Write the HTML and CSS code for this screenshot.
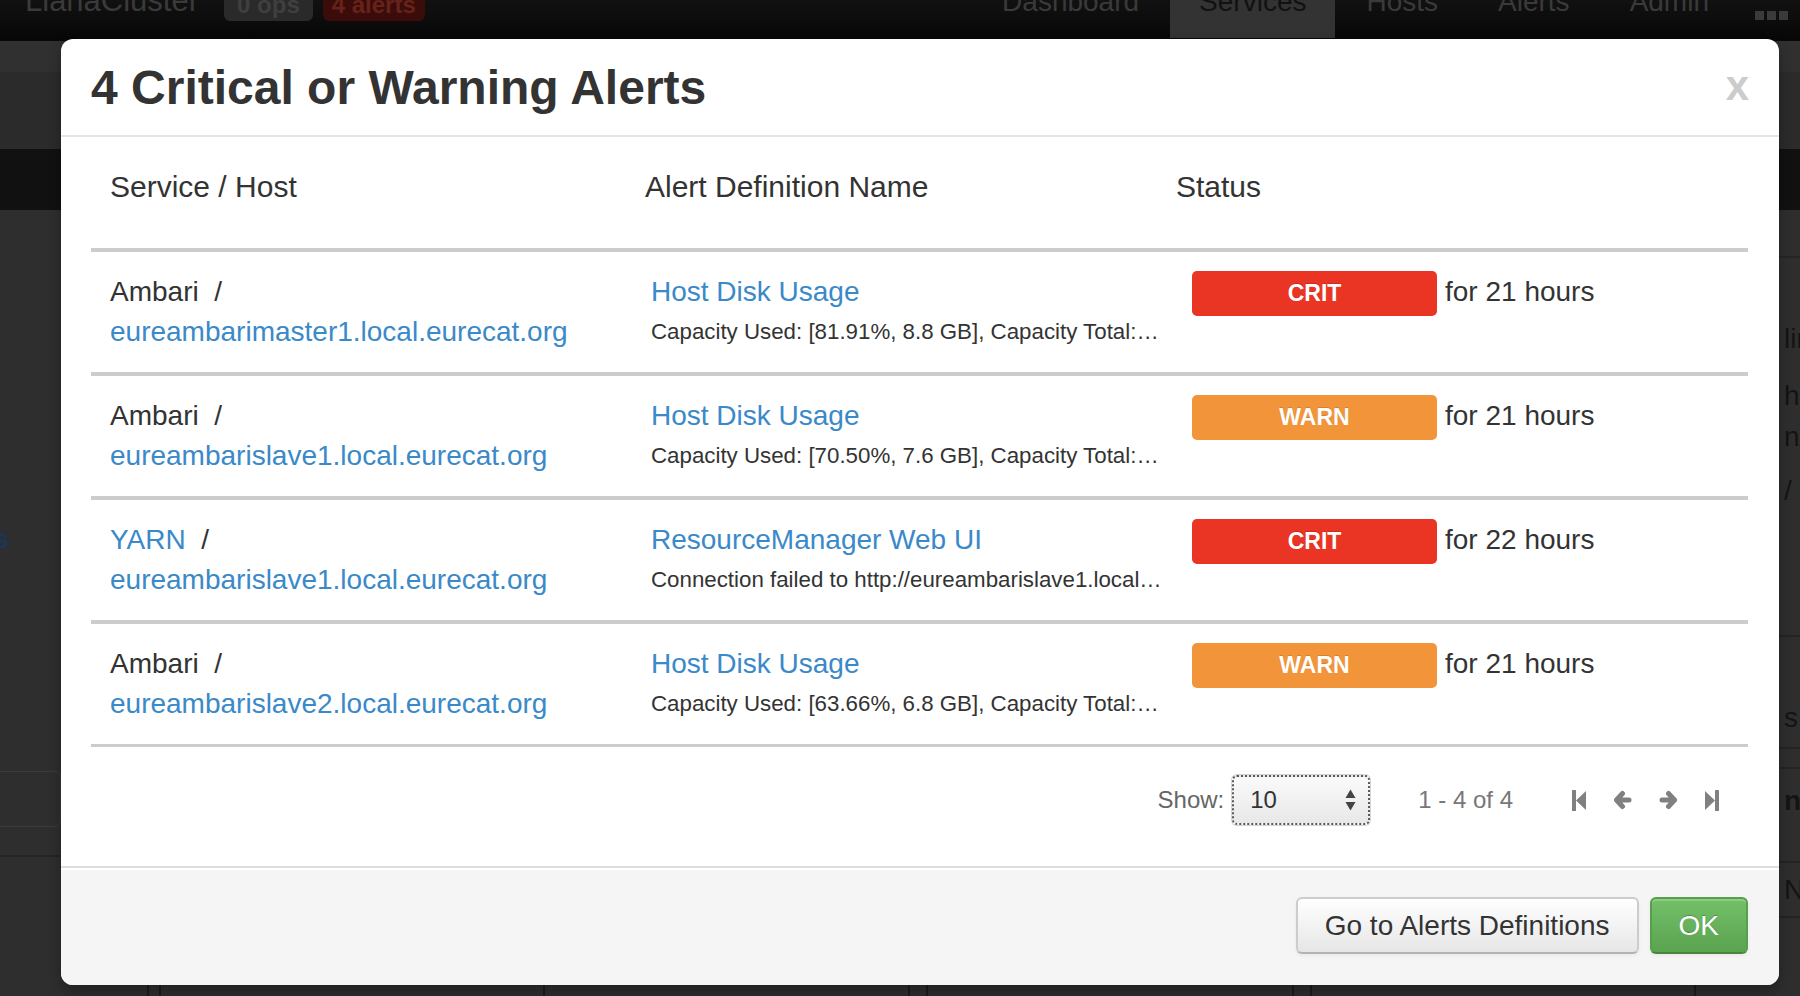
FILE: index.html
```html
<!DOCTYPE html>
<html lang="en">

<head>
  <meta charset="UTF-8">
  <title>Alerts</title>
  <link rel="stylesheet" href="styles.css">
</head>

<body>
  <div class="navbar">
    <span class="brand">LianaCluster</span>
    <span class="label label-ops">0 ops</span>
    <span class="label label-alerts">4 alerts</span>
    <ul class="nav">
      <li>Dashboard</li>
      <li class="active">Services</li>
      <li>Hosts</li>
      <li>Alerts</li>
      <li>Admin</li>
      <li class="apps">
        <svg width="40" height="12" viewBox="0 0 40 12">
          <rect x="0" y="0" width="9" height="9" />
          <rect x="12" y="0" width="9" height="9" />
          <rect x="24" y="0" width="9" height="9" />
        </svg>
      </li>
    </ul>
  </div>
  <div class="subbar"></div>
  <div class="subbar2"></div>
  <div class="crumbs"></div>

  <div class="main">
    <div class="left-col">
      <div class="left-link"><span>Services</span></div>
      <div class="left-box"></div>
      <div class="left-line"></div>
    </div>
    <div class="center-col">
      <div class="strip">
        <span style="width:88px"></span>
        <span style="width:12px"></span>
        <span style="width:384px"></span>
        <span style="width:365px"></span>
        <span style="width:18px"></span>
        <span style="width:366px"></span>
        <span style="width:18px"></span>
        <span style="width:384px"></span>
      </div>
    </div>
    <div class="right-col">
      <div class="r-block r-top"></div>
      <div class="r-text r-t1">lines</div>
      <div class="r-text r-t2">hir</div>
      <div class="r-text r-t3">n/a</div>
      <div class="r-text r-t4">/</div>
      <div class="r-line r-l1"></div>
      <div class="r-text r-t5">s</div>
      <div class="r-line r-l2"></div>
      <div class="r-line r-l3"></div>
      <div class="r-text r-t6 bold">ng</div>
      <div class="r-line r-l4"></div>
      <div class="r-text r-t7">N</div>
      <div class="r-line r-l5"></div>
    </div>
  </div>

  <div class="modal">
    <div class="modal-header">
      <h3>4 Critical or Warning Alerts</h3>
      <span class="close">x</span>
    </div>
    <div class="modal-body">
      <table class="alerts-table">
        <colgroup>
          <col class="c-host">
          <col class="c-name">
          <col>
        </colgroup>
        <thead>
          <tr>
            <th class="th-host">Service / Host</th>
            <th class="th-name">Alert Definition Name</th>
            <th class="th-status">Status</th>
          </tr>
        </thead>
        <tbody>
          <tr>
            <td>Ambari&nbsp; /<br><a href="#">eureambarimaster1.local.eurecat.org</a></td>
            <td><a href="#">Host Disk Usage</a>
              <div class="alert-text">Capacity Used: [81.91%, 8.8 GB], Capacity Total:…</div>
            </td>
            <td>
              <div class="status"><span class="badge crit">CRIT</span>for 21 hours</div>
            </td>
          </tr>
          <tr>
            <td>Ambari&nbsp; /<br><a href="#">eureambarislave1.local.eurecat.org</a></td>
            <td><a href="#">Host Disk Usage</a>
              <div class="alert-text">Capacity Used: [70.50%, 7.6 GB], Capacity Total:…</div>
            </td>
            <td>
              <div class="status"><span class="badge warn">WARN</span>for 21 hours</div>
            </td>
          </tr>
          <tr>
            <td><a href="#">YARN</a>&nbsp; /<br><a href="#">eureambarislave1.local.eurecat.org</a></td>
            <td><a href="#">ResourceManager Web UI</a>
              <div class="alert-text">Connection failed to http://eureambarislave1.local…</div>
            </td>
            <td>
              <div class="status"><span class="badge crit">CRIT</span>for 22 hours</div>
            </td>
          </tr>
          <tr>
            <td>Ambari&nbsp; /<br><a href="#">eureambarislave2.local.eurecat.org</a></td>
            <td><a href="#">Host Disk Usage</a>
              <div class="alert-text">Capacity Used: [63.66%, 6.8 GB], Capacity Total:…</div>
            </td>
            <td>
              <div class="status"><span class="badge warn">WARN</span>for 21 hours</div>
            </td>
          </tr>
        </tbody>
      </table>

      <div class="pager">
        <span class="show-label">Show:</span>
        <div class="page-size">
          <span>10</span>
          <svg width="11" height="22" viewBox="0 0 11 22">
            <path d="M0.5 9 L5.5 0.5 L10.5 9 Z" />
            <path d="M0.5 13 L5.5 21.5 L10.5 13 Z" />
          </svg>
        </div>
        <span class="page-count">1 - 4 of 4</span>
        <div class="page-icons">
          <svg width="14" height="21" viewBox="0 0 14 21">
            <rect x="0" y="0" width="4" height="21" rx="0.5" />
            <path d="M14 1 L4 10.5 L14 20 Z" />
          </svg>
          <svg width="19" height="20" viewBox="0 0 19 20" class="arrow">
            <path d="M9.5 3.5 L3.5 10 L9.5 16.5 M3.5 10 H16" />
          </svg>
          <svg width="19" height="20" viewBox="0 0 19 20" class="arrow">
            <path d="M9.5 3.5 L15.5 10 L9.5 16.5 M15.5 10 H3" />
          </svg>
          <svg width="14" height="21" viewBox="0 0 14 21">
            <rect x="10" y="0" width="4" height="21" rx="0.5" />
            <path d="M0 1 L10 10.5 L0 20 Z" />
          </svg>
        </div>
      </div>
    </div>
    <div class="modal-footer">
      <button class="btn">Go to Alerts Definitions</button>
      <button class="btn btn-success">OK</button>
    </div>
  </div>
</body>

</html>
```

FILE: styles.css
```css
* {
  box-sizing: border-box;
}

body {
  margin: 0;
  height: 100vh;
  background-color: #2e2e2e;
  font-family: "Liberation Sans", Arial, Helvetica, sans-serif;
  overflow: hidden;
  display: flex;
  flex-direction: column;
}

/* page behind the dialog (dimmed) */

.navbar {
  height: 53px;
  margin-top: -12px;
  flex-shrink: 0;
  background: linear-gradient(#141414, #070707);
  display: flex;
  align-items: flex-start;
  white-space: nowrap;
}

.brand {
  margin-left: 25px;
  margin-top: -3px;
  font-size: 31px;
  line-height: 31px;
  color: #3a3a3a;
}

.label {
  height: 33px;
  line-height: 33px;
  font-size: 24px;
  font-weight: bold;
  border-radius: 0 0 6px 6px;
}

.label-ops {
  margin-left: 25px;
  padding: 0 13px;
  background-color: #2a2a2a;
  color: #3f3f3f;
}

.label-alerts {
  margin-left: 10px;
  padding: 0 9px;
  background-color: #3b0c09;
  color: #66221b;
}

.nav {
  list-style: none;
  margin: 0 0 0 auto;
  padding: 0;
  display: flex;
  gap: 2px;
}

.nav li {
  height: 50px;
  padding: 0 29px;
  font-size: 28px;
  line-height: 28px;
  color: #3a3a3a;
}

.nav li.active {
  background-color: #333;
  color: #111;
}

.nav li.apps {
  padding: 12px 5px 0 15px;
}

.apps svg {
  fill: #3a3a3a;
}

.subbar {
  height: 31px;
  flex-shrink: 0;
  background-color: #303030;
}

.subbar2 {
  height: 77px;
  flex-shrink: 0;
  background-color: #2b2b2b;
}

.crumbs {
  height: 61px;
  flex-shrink: 0;
  background-color: #111;
}

.main {
  flex: 1;
  display: grid;
  grid-template-columns: 61px 1fr 21px;
}

.left-col {
  display: flex;
  flex-direction: column;
}

.left-link {
  margin-top: 309px;
  width: 9px;
  height: 40px;
  line-height: 40px;
  overflow: hidden;
  display: flex;
  justify-content: flex-end;
  white-space: nowrap;
  font-size: 28px;
  font-weight: bold;
  color: #1d3655;
}

.left-box {
  margin-top: 212px;
  height: 56px;
  border: 1px solid #3a3a3a;
  border-left: none;
  border-radius: 0 6px 6px 0;
}

.left-line {
  margin-top: 28px;
  border-top: 2px solid #242424;
}

.center-col {
  display: flex;
  flex-direction: column;
}

.strip {
  margin-top: auto;
  height: 11px;
  display: flex;
}

.strip span {
  border-right: 2px solid #1c1c1c;
}

.right-col {
  display: flex;
  flex-direction: column;
  white-space: nowrap;
  overflow: hidden;
  font-size: 28px;
  color: #141414;
}

.r-top {
  height: 48px;
  border-bottom: 2px solid #252525;
}

.r-text {
  height: 40px;
  line-height: 40px;
  padding-left: 5px;
}

.r-line {
  border-top: 2px solid #242424;
}

.bold {
  font-weight: bold;
}

.r-t1 { margin-top: 61px; }
.r-t2 { margin-top: 17px; }
.r-t3 { margin-top: 1px; }
.r-t4 { margin-top: 14px; }
.r-l1 { margin-top: 124px; }
.r-t5 { margin-top: 61px; }
.r-l2 { margin-top: 9px; }
.r-l3 { margin-top: 18px; }
.r-t6 { margin-top: 12px; }
.r-l4 { margin-top: 40px; }
.r-t7 { margin-top: 7px; }
.r-l5 { margin-top: 6px; }

/* dialog */

.modal {
  position: absolute;
  top: 39px;
  left: 61px;
  width: 1718px;
  height: 946px;
  background-color: #fff;
  border-radius: 12px;
  box-shadow: 0 6px 14px rgba(0, 0, 0, 0.3);
  display: flex;
  flex-direction: column;
  overflow: hidden;
  color: #333;
}

.modal-header {
  display: flex;
  align-items: flex-start;
  padding: 21px 30px 19px;
  border-bottom: 2px solid #e5e5e5;
}

.modal-header h3 {
  flex: 1;
  margin: 0;
  font-size: 48px;
  line-height: 56px;
  font-weight: bold;
}

.close {
  margin-top: 5px;
  margin-right: 0;
  font-size: 42px;
  line-height: 42px;
  font-weight: bold;
  color: #cccccc;
  cursor: pointer;
}

.modal-body {
  flex: 1;
  padding: 30px 31px 0 30px;
}

.alerts-table {
  width: 100%;
  table-layout: fixed;
  border-collapse: separate;
  border-spacing: 0;
  font-size: 28px;
}

.c-host,
.c-name {
  width: 541px;
}

.alerts-table th {
  padding: 0 19px 41px;
  font-size: 30px;
  line-height: 40px;
  font-weight: normal;
  text-align: left;
  border-bottom: 4px solid #cccccc;
}

.alerts-table .th-name {
  padding-left: 13px;
}

.alerts-table .th-status {
  padding-left: 3px;
}

.alerts-table td {
  padding: 20px 19px;
  line-height: 40px;
  vertical-align: top;
  white-space: nowrap;
  border-bottom: 4px solid #cccccc;
}

.alerts-table tr:last-child td {
  border-bottom-width: 3px;
}

a {
  color: #3a89c9;
  text-decoration: none;
}

.alert-text {
  font-size: 22.3px;
}

.status {
  display: flex;
  align-items: center;
  gap: 8px;
  height: 40px;
}

.badge {
  flex-shrink: 0;
  width: 245px;
  height: 45px;
  margin-top: 2px;
  line-height: 45px;
  border-radius: 5px;
  text-align: center;
  font-size: 23px;
  font-weight: bold;
  color: #fff;
  text-shadow: 0 -1px 0 rgba(0, 0, 0, 0.15);
}

.crit {
  background-color: #ea3424;
}

.warn {
  background-color: #f29439;
}

.pager {
  margin-top: 28px;
  padding-right: 29px;
  display: flex;
  justify-content: flex-end;
  align-items: center;
  font-size: 24px;
  color: #666;
}

.page-size {
  margin-left: 8px;
  width: 138px;
  height: 50px;
  padding: 0 12px 0 16px;
  display: flex;
  justify-content: space-between;
  align-items: center;
  border: 2px dotted #5a5a5a;
  border-radius: 5px;
  background: linear-gradient(#fafafa, #e8e8e8);
  box-shadow: 0 0 0 1px #d4d4d4;
  color: #333;
}

.page-size svg {
  fill: #444;
}

.page-count {
  margin-left: 48px;
  color: #777;
}

.page-icons {
  margin-left: 59px;
  display: flex;
  align-items: center;
  gap: 27px;
  fill: #808080;
}

.arrow path {
  fill: none;
  stroke: #808080;
  stroke-width: 5;
  stroke-linecap: round;
  stroke-linejoin: round;
}

.modal-footer {
  padding: 29px 31px 31px;
  display: flex;
  justify-content: flex-end;
  gap: 11px;
  background-color: #f5f5f5;
  border-top: 2px solid #dddddd;
  box-shadow: inset 0 2px 0 #fff;
}

.btn {
  height: 57px;
  padding: 0 27px;
  font-family: inherit;
  font-size: 28px;
  color: #333;
  background: linear-gradient(#ffffff, #e6e6e6);
  border: 2px solid #cccccc;
  border-bottom-color: #b3b3b3;
  border-radius: 6px;
  box-shadow: inset 0 2px 0 rgba(255, 255, 255, 0.2), 0 2px 4px rgba(0, 0, 0, 0.05);
  cursor: pointer;
}

.btn-success {
  color: #fff;
  background: linear-gradient(#74c068, #5aa350);
  border-color: #579e4d #579e4d #47863e;
  text-shadow: 0 -1px 0 rgba(0, 0, 0, 0.25);
}
```
